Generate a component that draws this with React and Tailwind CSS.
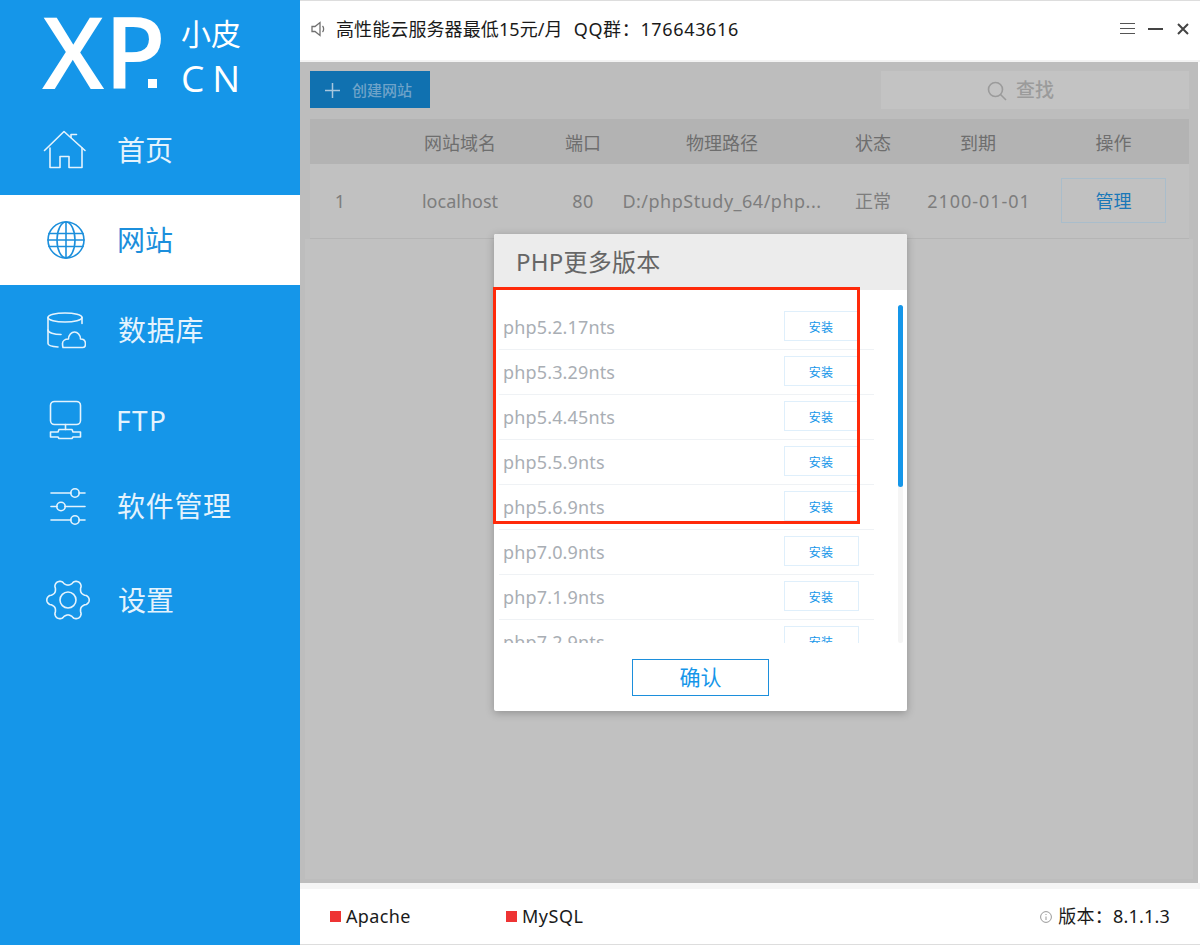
import React from "react";

const Stroke = ({ className, children, w = 40, h = 40, sw = 1.6 }) => (
  <svg width={w} height={h} viewBox={`0 0 ${w} ${h}`} fill="none" stroke="currentColor" strokeWidth={sw} strokeLinecap="round" strokeLinejoin="round" className={className}>
    {children}
  </svg>
);

const gearPath = (() => {
  const pts = [];
  for (let i = 0; i < 180; i++) {
    const t = (i / 180) * Math.PI * 2;
    const c = Math.cos(6 * t);
    const r = 18.2 + 3 * Math.sign(c) * Math.pow(Math.abs(c), 0.7);
    pts.push(`${(22 + r * Math.cos(t)).toFixed(2)} ${(21 + 0.98 * r * Math.sin(t)).toFixed(2)}`);
  }
  return `M${pts.join("L")}Z`;
})();

const icons = {
  home: (
    <Stroke w={44} h={40}>
      <path d="M1.500 20.500 21 1.500 42 20.500" />
      <path d="M28 7.500V4.500h5.500" />
      <path d="M7 18v19.500h10V26.500h9v11h13V18" />
    </Stroke>
  ),
  globe: (
    <Stroke w={40} h={40}>
      <circle cx="20" cy="20" r="18" />
      <ellipse cx="20" cy="20" rx="9" ry="18" />
      <path d="M20 2v36M3 13.500h34M3 26.500h34M2 20h36" />
    </Stroke>
  ),
  db: (
    <Stroke w={40} h={38}>
      <ellipse cx="19" cy="6.500" rx="17" ry="4.500" />
      <path d="M2 6.500v26c0 2 4 3 10 3.500M36 6.500v6" />
      <path d="M2 19c0 2.500 6 4.500 13 4.500" />
      <path d="M17 36.500h20c2 0 2.500-2 2.500-3.500 0-3-2-5-5-5 0-4-3-7-6-7s-6 3-6 7c-3.500 0-6 2-6 4.500 0 2 .5 4 .5 4z" />
    </Stroke>
  ),
  ftp: (
    <Stroke w={34} h={40}>
      <rect x="1.500" y="1.500" width="30" height="23" rx="4" />
      <path d="M16.500 24.500v5" />
      <path d="M10 29.500h13l1 2.500h7.500v5H24l-1 1.500H10L9 37H1.500v-5H9z" />
    </Stroke>
  ),
  sliders: (
    <Stroke w={38} h={40}>
      <path d="M2 7h20M30 7h6M2 20.500h6M16 20.500h20M2 34h20M30 34h6" />
      <circle cx="26" cy="7" r="4.200" />
      <circle cx="12" cy="20.500" r="4.200" />
      <circle cx="26" cy="34" r="4.200" />
    </Stroke>
  ),
  gear: (
    <Stroke w={44} h={42}>
      <circle cx="22" cy="21" r="8" />
      <path d={gearPath} />
    </Stroke>
  ),
};

const nav = [
  { icon: "home", label: "首页", h: "h-[90px]", il: "ml-0", tl: "w-[74px]", ls: "text-[28px] leading-none" },
  { icon: "globe", label: "网站", h: "h-[90px]", active: true, il: "ml-[3px]", tl: "w-[71px]", ls: "text-[28px] leading-none" },
  { icon: "db", label: "数据库", h: "h-[90px]", il: "ml-[3px]", tl: "w-[72px]", ls: "text-[28px] leading-none tracking-[0.7px]" },
  { icon: "ftp", label: "FTP", h: "h-[90px]", il: "ml-[6px]", tl: "w-[68px]", ls: "-ml-[1px] tracking-[1.5px] text-[28px]" },
  { icon: "sliders", label: "软件管理", h: "h-[82px]", il: "ml-[6px]", tl: "w-[69px]", ls: "-ml-[1px] text-[28px] leading-none tracking-[0.7px]" },
  { icon: "gear", label: "设置", h: "h-[106px]", il: "ml-[3px]", tl: "w-[73px]", ls: "-ml-[1px] text-[28px] leading-none" },
];

const versions = ["php5.2.17nts", "php5.3.29nts", "php5.4.45nts", "php5.5.9nts", "php5.6.9nts", "php7.0.9nts", "php7.1.9nts", "php7.2.9nts"];

const cols = "grid grid-cols-[60px_180px_66px_212px_90px_120px_151px]";

export default function App() {
  return (
    <div className="relative flex h-[945px] w-[1200px] overflow-hidden bg-white font-['Noto_Sans','Noto_Sans_CJK_SC',sans-serif]">
      <aside className="flex w-[300px] shrink-0 flex-col bg-[#1596e9] text-white">
        <div className="relative flex h-[105px] items-start pl-[42px]">
          <div className="flex h-[100px] w-[139px] font-['Open_Sans',sans-serif] text-[100px] font-semibold leading-[100px] tracking-[-1px]">
            <span>X</span>
            <span className="ml-[1px]">P</span>
          </div>
          <div className="absolute left-[148px] top-[79px] h-[9px] w-[9px] bg-white"></div>
          <div className="flex flex-col pt-[16px]">
            <span className="text-[30px] leading-[36px]">小皮</span>
            <span className="mt-[4px] font-['Open_Sans',sans-serif] text-[37px] leading-[44px] tracking-[8px]">CN</span>
          </div>
        </div>
        {nav.map((n) => (
          <div key={n.label} className={`flex items-center pl-[43px] ${n.h} ${n.active ? "bg-white text-[#1c8fdc]" : "text-[#e4f3fd]"}`}>
            <div className={`flex shrink-0 ${n.tl} ${n.il}`}>{icons[n.icon]}</div>
            <span className={n.ls}>{n.label}</span>
          </div>
        ))}
      </aside>

      <main className="flex min-w-0 flex-1 flex-col">
        <header className="flex h-[62px] shrink-0 items-center border-t border-b-2 border-t-[#dddddd] border-b-[#f3f3f3] pl-[11px] pr-[11px]">
          <svg width="15" height="16" viewBox="0 0 15 16" fill="none" stroke="#707070" strokeWidth="1.300" className="mb-[3px] mr-[10px]">
            <path d="M1 5.500h3L9 1.500v13l-5-4H1z" />
            <path d="M11.500 5c1.500 1.500 1.500 4.500 0 6" />
          </svg>
          <span className="mb-[2px] text-[18px] tracking-[0.1px] text-[#1a1a1a]">高性能云服务器最低15元/月</span>
          <span className="mb-[2px] ml-[11px] text-[18px] tracking-[0.65px] text-[#1a1a1a]">QQ群：176643616</span>
          <div className="mb-[4px] ml-auto flex items-center">
            <svg width="15" height="12" viewBox="0 0 15 12" stroke="#555" strokeWidth="1" className="mr-[13px]">
              <path d="M0 .5h15M0 5.500h15M0 10.500h15" />
            </svg>
            <div className="mr-[14px] h-[2px] w-[15px] bg-[#444]"></div>
            <svg width="12" height="12" viewBox="0 0 12 12" stroke="#444" strokeWidth="2">
              <path d="M1 1l10 10M11 1 1 11" />
            </svg>
          </div>
        </header>

        <section className="flex min-h-0 flex-1 flex-col border-r-2 border-r-white bg-[#bdbdbd] px-[5px] pb-[4px]">
          <div className="flex flex-1 flex-col bg-[#c1c1c1]">
            <div className="-mx-[5px] bg-[#bdbdbd] pl-[10px] pr-[9px] pt-[9px]">
              <div className="flex h-[48px] items-start justify-between">
                <div className="flex h-[37px] w-[120px] items-center bg-[#1071b0] pl-[15px] pt-[1px] text-[15px] font-medium text-[#6fa3c9]">
                  <svg width="15" height="15" viewBox="0 0 15 15" stroke="#a8c7de" strokeWidth="1.500" className="mr-[12px]">
                    <path d="M7.500 0v15M0 7.500h15" />
                  </svg>
                  创建网站
                </div>
                <div className="flex h-[38px] w-[308px] items-center bg-[#c3c3c3] pl-[106px] pt-[1px] text-[19px] font-medium text-[#9b9b9b]">
                  <svg width="20" height="20" viewBox="0 0 20 20" fill="none" stroke="#9b9b9b" strokeWidth="1.600" className="mr-[9px]">
                    <circle cx="8.500" cy="8.500" r="7" />
                    <path d="M13.500 13.500 19 19" />
                  </svg>
                  查找
                </div>
              </div>
              <div className={`${cols} h-[45px] items-center bg-[#b3b3b3] pt-[3px] text-center text-[18px] text-[#6e6e6e]`}>
                <span></span>
                <span>网站域名</span>
                <span>端口</span>
                <span>物理路径</span>
                <span>状态</span>
                <span>到期</span>
                <span>操作</span>
              </div>
              <div className={`${cols} h-[75px] items-center border-b border-b-[#b5b5b5] bg-[#c1c1c1] text-center text-[18px] text-[#7d7d7d]`}>
                <span>1</span>
                <span>localhost</span>
                <span className="tracking-[0.5px]">80</span>
                <span className="whitespace-nowrap tracking-[0.5px]">D:/phpStudy_64/php...</span>
                <span>正常</span>
                <span className="pl-[2px] tracking-[0.95px]">2100-01-01</span>
                <div className="flex justify-center">
                  <div className="mb-[2px] flex h-[45px] w-[105px] items-center justify-center border border-[#a9bdcb] pt-[2px] text-[#1a78b8]">管理</div>
                </div>
              </div>
            </div>
          </div>
        </section>

        <footer className="relative flex h-[62px] shrink-0 items-center border-t-[6px] border-b border-t-[#f5f5f5] border-b-[#dddddd] pl-[30px] pr-[30px] text-[18px] text-[#1a1a1a]">
          <div className="flex w-[176px] items-center tracking-[0.35px]">
            <span className="mr-[5px] h-[11px] w-[11px] bg-[#ee3434]"></span>Apache
          </div>
          <div className="flex items-center tracking-[0.5px]">
            <span className="mr-[5px] h-[11px] w-[11px] bg-[#ee3434]"></span>MySQL
          </div>
          <div className="ml-auto flex items-center tracking-[0.2px]">
            <svg width="12" height="12" viewBox="0 0 12 12" fill="none" stroke="#999" strokeWidth="1" className="mr-[6px]">
              <circle cx="6" cy="6" r="5.400" />
              <path d="M6 5.500v3.500M6 3v1" />
            </svg>
            版本：8.1.1.3
          </div>
        </footer>
      </main>

      {/* dialog */}
      <div className="absolute left-[494px] top-[234px] flex h-[477px] w-[413px] flex-col rounded-[2px] bg-white shadow-[0_2px_8px_rgba(0,0,0,0.25)]">
        <div className="flex h-[56px] shrink-0 items-center rounded-t-[2px] bg-[#ececec] pl-[22px] text-[24px] tracking-[0.25px] text-[#666666]">PHP更多版本</div>
        <div className="relative h-[353px] shrink-0 pl-[5px] pt-[15px]">
          <div className="h-[338px] w-[375px] overflow-hidden">
            {versions.map((v) => (
              <div key={v} className="flex h-[45px] items-center justify-between border-b border-b-[#eff2f5] pl-[4px] pr-[15px] text-[18px] tracking-[0.15px] text-[#a9aeb4]">
                <span>{v}</span>
                <div className="mb-[2px] flex h-[30px] w-[75px] items-center justify-center border border-[#dfeffb] pr-[1px] pt-[3px] text-[12px] text-[#1596e9]">安装</div>
              </div>
            ))}
          </div>
          <div className="absolute left-[404px] top-[15px] h-[338px] w-[5px] rounded-full bg-[#f5f5f5]">
            <div className="h-[182px] w-[5px] rounded-full bg-[#1596e9]"></div>
          </div>
        </div>
        <div className="flex flex-1 justify-center pt-[16px]">
          <div className="flex h-[37px] w-[137px] items-center justify-center border border-[#1c8fdc] pt-[1px] text-[21px] text-[#1596e9]">确认</div>
        </div>
      </div>

      {/* annotation */}
      <div className="pointer-events-none absolute left-[493px] top-[287px] h-[237px] w-[367px] border-[3px] border-[#ff2a0a]"></div>
    </div>
  );
}
